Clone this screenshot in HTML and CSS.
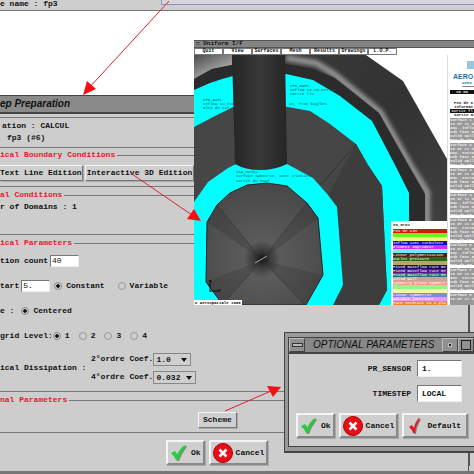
FILE: index.html
```html
<!DOCTYPE html>
<html lang="en">
<head>
<meta charset="utf-8">
<title>Step Preparation</title>
<link rel="stylesheet" href="styles.css">
</head>
<body>
<div class="desktop">
  <header class="strip"><span>e name : fp3</span><span class="strip-box"></span></header>

  <main class="prep">
    <h1 class="titlebar">ep Preparation</h1>
    <form class="form">
      <section class="info">
        <p class="row">ation : CALCUL</p>
        <p class="row file">fp3 (#6)</p>
      </section>
      <section class="boundary">
        <h2>ical Boundary Conditions</h2>
        <div class="tabs">
          <button type="button" class="btn first">Text Line Edition</button>
          <button type="button" class="btn">Interactive 3D Edition</button>
        </div>
      </section>
      <section class="initial">
        <h2>al Conditions</h2>
        <p class="row">r of Domains : 1</p>
      </section>
      <section class="numeric">
        <h2>ical Parameters</h2>
        <div class="rows">
          <div class="row"><label for="count">tion count</label><input class="field" id="count" value="40"></div>
          <div class="row"><label for="start">tart</label><input class="field" id="start" value="5.">
            <label class="opt wide"><input type="radio" name="kind" checked>Constant</label>
            <label class="opt"><input type="radio" name="kind">Variable</label></div>
          <div class="row"><span>e :</span><label class="opt"><input type="radio" name="scheme" checked>Centered</label></div>
          <div class="row levels"><span>grid Level:</span>
            <label class="opt"><input type="radio" name="level" checked>1</label>
            <label class="opt"><input type="radio" name="level">2</label>
            <label class="opt"><input type="radio" name="level">3</label>
            <label class="opt"><input type="radio" name="level">4</label></div>
        </div>
        <div class="dissipation">
          <span class="diss-name">ical Dissipation :</span>
          <div class="coefs">
            <div class="row"><label for="c2">2°ordre Coef.</label><span class="pick"><select id="c2"><option>1.0</option></select></span></div>
            <div class="row"><label for="c4">4°ordre Coef.</label><span class="pick long"><select id="c4"><option>0.032</option></select></span></div>
          </div>
        </div>
      </section>
      <section class="optional">
        <h2>nal Parameters</h2>
        <button type="button" class="btn scheme">Scheme</button>
      </section>
      <section class="actions">
        <button type="button" class="btn big"><svg class="icon" viewBox="0 0 18 18"><path d="M2 10l4-2 2 4Q11 5 16 2l1 1Q12 9 9 17H7Q5 12 2 10z" fill="#888"/><path d="M1 9l4-2 2 4Q10 4 15 1l1 1Q11 8 8 16H6Q4 11 1 9z" fill="#25cf3b"/></svg>Ok</button>
        <button type="button" class="btn big"><svg class="icon round" viewBox="0 0 20 20"><circle cx="10" cy="10" r="9.5" fill="#e90d18" stroke="#a00"/><path d="M6.500 6.500l7 7M13.500 6.500l-7 7" stroke="#fff" stroke-width="2.500"/></svg>Cancel</button>
      </section>
    </form>
  </main>

  <section class="viewer">
    <h2 class="viewer-title">▭ Uniform I/F</h2>
    <nav class="menu"><button>Quit</button><button>View</button><button>Surfaces</button><button>Mesh</button><button>Results</button><button>Drawings</button><button>L.O.P.</button></nav>
    <div class="stage">
      <div class="canvas">
        <svg class="scene" viewBox="194 55 253 250">
          <defs>
            <linearGradient id="body" x1="0" y1="0" x2="1" y2="1"><stop offset="0" stop-color="#3b3b3b"/><stop offset=".5" stop-color="#333"/><stop offset="1" stop-color="#464646"/></linearGradient>
            <linearGradient id="shineL" gradientUnits="userSpaceOnUse" x1="200" y1="50" x2="212" y2="76"><stop offset="0" stop-color="#444"/><stop offset="1" stop-color="#aaa"/></linearGradient>
            <linearGradient id="tube" x1="0" x2="1"><stop offset="0" stop-color="#262626"/><stop offset=".5" stop-color="#383838"/><stop offset="1" stop-color="#262626"/></linearGradient>
            <radialGradient id="hub" gradientUnits="userSpaceOnUse" cx="262" cy="259" r="76"><stop offset="0" stop-color="#111"/><stop offset=".1" stop-color="#383838"/><stop offset=".24" stop-color="#5b5b5b"/><stop offset="1" stop-color="#484848"/></radialGradient>
            <filter id="soft"><feGaussianBlur stdDeviation="2"/></filter>
            <clipPath id="outer"><path d="M194 55H366L403 81 447 159V305H194z"/></clipPath>
          </defs>
          <path fill="#fff" d="M194 55h253v250H194z"/>
          <g clip-path="url(#outer)">
            <path fill="url(#body)" d="M194 55h253v250H194z"/>
            <path fill="url(#shineL)" d="M194 55h38v10l-20 4-18 10z"/>
            <path d="M286 58l30 5 18 11 46 38 30 53 17 27v120" fill="none" stroke="#999" stroke-width="6" filter="url(#soft)"/>
            <path d="M194 79l18-10 20-4 54-1 27 5 22 9 44 35 30 53 16 28v111H194z" fill="#2b2b2b"/>
            <path d="M334 76l46 36 30 53 16 27v113" fill="none" stroke="#858585"/>
            <path fill="#0ff" d="M194 90l16-7 12-4 11-3 53-2 27 6 27 16 32 25 23 44 14 28v112H194z"/>
            <path fill="#464646" d="M194 127l21-11 18-9 55 0 22 4 20 13 26 20 12 21 14 21 5 104-8 15H194z"/>
            <path fill="#3d3d3d" d="M356 144l12 21 14 21 5 104-8 15h-47l11-20-6-78-9-12z"/>
            <path d="M356 144l-35 41" stroke="#333"/>
            <path fill="#0ff" d="M194 202l14-20 20-14 8-4h51l26 14 15 17 9 12 6 78-10 20H194z"/>
            <path fill="url(#hub)" stroke="#222" d="M207 222l10-17 13-12 17-8 20-2 20 3 20 17 11 15 5 57-17 30h-83l-17-23z"/>
            <path fill="#242424" opacity=".2" d="M217 205l45 55-55-38zM307 203l-45 57 56-42zM206 282l56-22-40 45zM305 305l-43-45 61 15z"/>
            <path d="M217 205l45 55 45-57M262 260l-40 45M262 260l43 45" fill="none" stroke="#333" stroke-opacity=".6"/>
            <path d="M255 263l7-4 5-3" stroke="#aaa" fill="none"/>
            <path fill="url(#tube)" d="M232 55h53l2 109q-12 6-27 6-15 0-25-6z"/>
          </g>
          <g class="note">
            <text x="203" y="101">CFD_AXEL</text><text x="203" y="105">Inflow su_ext</text><text x="203" y="109">Bleu de CiP</text>
            <text x="290" y="87">CFD_BAFX</text><text x="290" y="91">Inflow Co.sm-Ext.Bo</text><text x="290" y="95">Sortie flu</text><text x="289" y="105">in, free bag/bec</text>
            <text x="236" y="173">SCA_MOYEU</text><text x="236" y="177">Surface symetrie, avec transition E</text><text x="236" y="182">Sortie du Ouaf</text>
          </g>
          <path d="M210 280v12M210 291h10M209 281h3M218 290h3" stroke="#111" fill="none"/>
          <path fill="#fff" d="M194 300h48v5h-48z"/>
          <text class="credit" x="195" y="304">C Aerospatiale 1998</text>
        </svg>
        <div class="legend">
          <p>IN_Grau</p>
          <ul>
            <li class="c1">Peu de CiM</li><li class="c2"></li><li class="c3"></li><li class="c4">Inflow avec turbulent</li><li class="c5">Element imprimeur</li><li class="c6"></li><li class="c7">Linear polymerisation</li><li class="c8">Outlet pressure</li><li class="c9"></li><li class="c10">Fixed massflow rate me</li><li class="c11">Fixed massflow rate me</li><li class="c12">Fixed massflow rate me</li><li class="c13">Solid wall</li><li class="c14">Symmetry plane symmetr</li><li class="c15"></li><li class="c16"></li><li class="c17">Linear symmetrie</li><li class="c18">Adiabat junctions</li><li class="c20">Face interact to a pla</li>
          </ul>
        </div>
      </div>
      <aside class="side">
        <svg class="mark" viewBox="0 0 8 8"><path d="M1 1h7M1 3h7M1 5h7M1 7h7" stroke="#2a91c4"/></svg>
        <b class="brand">AERO</b>
        <i class="sub">AERO</i>
        <p class="bar">3D EN</p>
        <p class="lines">Peu de C<br>informat</p>
        <p class="bar">Sortie fl</p>
        <p class="lines last">Sortie m</p>
        <div class="cards">
          <p>Surface 1<br>10 07 11 0<br>Dac. inflo<br>Sub face B<br>Solid wall<br>Peu de CF</p>
          <p>Surface 2<br>10 07 11 0<br>Dac. extra<br>Sub face B<br>Solid wall<br>Peu de CF</p>
          <p>Surface 3<br>10 07 11 0<br>Dac. extra<br>Sub face B<br>Solid wall<br>Peu de CF</p>
          <p>Surface 4<br>10 07 11 0<br>Dac. inflo<br>Sub face B<br>Solid wall<br>Peu de CF</p>
          <p>Surface 5<br>10 07 11 0<br>Dac. extra<br>Sub face B<br>Solid wall<br>Peu de CF</p>
          <p>Surface 6<br>10 07 11 0<br>Dac. inflo<br>Sub face B<br>Solid wall<br>Peu de CF</p>
          <p>Surface 7<br>10 07 11 0<br>Dac. extra<br>Sub face B<br>Solid wall<br>Peu de CF</p>
          <p>Surface 8<br>10 07 11 0</p>
        </div>
      </aside>
    </div>
  </section>

  <section class="dialog">
    <div class="dialog-inner">
      <header class="dialog-title">
        <button class="wm" aria-label="Menu"><span class="dash"></span></button>
        <h2>OPTIONAL PARAMETERS</h2>
        <button class="wm" aria-label="Minimize"><span class="dot"></span></button>
        <button class="wm" aria-label="Maximize"><span class="square"></span></button>
      </header>
      <form class="dialog-form">
        <div class="pair"><label for="sensor">PR_SENSOR</label><input id="sensor" value="1."></div>
        <div class="pair"><label for="step">TIMESTEP</label><input id="step" value="LOCAL"></div>
        <div class="dialog-actions">
          <button type="button" class="btn big"><svg class="icon" viewBox="0 0 18 18"><path d="M2 10l4-2 2 4Q11 5 16 2l1 1Q12 9 9 17H7Q5 12 2 10z" fill="#888"/><path d="M1 9l4-2 2 4Q10 4 15 1l1 1Q11 8 8 16H6Q4 11 1 9z" fill="#25cf3b"/></svg>Ok</button>
          <button type="button" class="btn big"><svg class="icon round" viewBox="0 0 20 20"><circle cx="10" cy="10" r="9.5" fill="#e90d18" stroke="#a00"/><path d="M6.500 6.500l7 7M13.500 6.500l-7 7" stroke="#fff" stroke-width="2.500"/></svg>Cancel</button>
          <button type="button" class="btn big default"><svg class="icon" viewBox="0 0 18 18"><path d="M4 11l3-2 2 3Q10 6 14 2l1 1Q11 9 10 17H8Q7 13 4 11z" fill="#888"/><path d="M3 10l3-2 2 3Q9 5 13 1l1 1Q10 8 9 16H7Q6 12 3 10z" fill="#e01c28"/></svg>Default</button>
        </div>
      </form>
    </div>
  </section>

  <svg class="arrows" viewBox="0 0 474 474" width="474" height="474" aria-hidden="true">
    <path d="M169 1L88 89M132 174l60 41M225 411l46-20" stroke="#d8232f" fill="none"/>
    <path d="M83 95l4-14 9 8zM201 221l-14-2 7-10zM281 387l-14-1 6 11z" fill="#fb0d12"/>
  </svg>
</div>
</body>
</html>
```
FILE: styles.css
```css
* { box-sizing: border-box; }
body { margin: 0; background: #fff; color: #111; font: bold 8px/12px "Liberation Mono", monospace; }
h1, h2, p, ul { margin: 0; padding: 0; font-size: inherit; }
button, input, select { font: inherit; color: inherit; margin: 0; border-radius: 0; }
.desktop { position: relative; overflow: hidden; min-height: 100vh; }

.strip { display: flex; height: 11px; line-height: 8px; background: #cfcfcf; border-bottom: 1px solid #777; white-space: pre; }
.strip-box { flex: 1; height: 5px; margin-left: 103px; border: solid #8f8fc0; border-width: 0 0 1px 1px; background: #d6d6da; }

.prep { margin-top: 84px; background: #cdcdcd; border-bottom: 3px solid #777; }
.titlebar { height: 19px; background: #8a8a8a; border-top: 1px solid #444; border-bottom: 2px solid #444; font: italic bold 10px/16px "Liberation Sans", sans-serif; }
.form { margin-right: 5px; padding-top: 3px; border-right: 1px solid #555; box-shadow: 6px 0 0 -5px #555; }
.form section { border-top: 1px solid #777; padding-top: 2px; }
.row { display: flex; align-items: center; height: 12px; }
.form h2 { display: flex; align-items: center; gap: 2px; line-height: 12px; color: #e11a2b; }
.form h2::after { content: ""; flex: 1; border-top: 1px solid #777; }
.info { height: 30px; }
.info .row { padding-left: 2px; }
.info .file { padding-left: 7px; }
.form .boundary { height: 39px; padding-top: 1px; }
.tabs { display: flex; gap: 2px; margin-top: 4px; }
.btn { height: 16px; padding: 0 4px; background: #cfcfcf; border: 1px solid; border-color: #f5f5f5 #777 #777 #f5f5f5; box-shadow: 1px 1px 0 #aaa; line-height: 12px; white-space: nowrap; }
.tabs .btn { padding: 0 1px; }
.tabs .first { padding: 0; border-left: 0; }
.initial { height: 48px; }
.rows { display: flex; flex-direction: column; gap: 13px; margin-top: 6px; }
.field { width: 29px; height: 12px; margin-left: 2px; padding: 0 1px; border: 1px solid; border-color: #777 #eee #eee #777; background: #fff; font-weight: normal; }
.opt { display: flex; align-items: center; gap: 4px; margin-left: 13px; }
.opt.wide { margin-left: 4px; }
.opt input { appearance: none; width: 8px; height: 8px; border: 1px solid #999; border-radius: 50%; }
.opt input:checked { background: radial-gradient(#111 35%, #cdcdcd 50%); border-color: #888; }
.rows .row:nth-child(3) .opt { margin-left: 7px; }
.levels .opt { margin-left: 9px; }
.levels .opt:first-of-type { margin-left: 0; }
.dissipation { display: flex; align-items: center; margin-top: 11px; padding-bottom: 8px; }
.diss-name { width: 91px; white-space: nowrap; }
.coefs { display: flex; flex-direction: column; gap: 6px; }
.pick { position: relative; width: 38px; height: 13px; }
.pick.long { width: 43px; }
.pick select { appearance: none; display: block; width: 100%; height: 100%; padding: 0 2px; border: 1px solid #888; background: #cfcfcf; }
.pick::after { content: ""; position: absolute; right: 4px; top: 5px; border: 3px solid transparent; border-top: 4px solid #111; border-bottom: 0; pointer-events: none; }
.optional { height: 41px; }
.scheme { display: block; margin: 6px 0 0 198px; }
.form .actions { display: flex; gap: 4px; padding: 7px 0 6px 166px; }
.btn.big { display: flex; align-items: center; gap: 3px; height: 25px; padding: 0 2px; border-width: 2px; border-color: #f5f5f5 #888 #888 #f5f5f5; }
.icon { flex: none; width: 18px; height: 18px; }
.icon.round { width: 20px; height: 20px; }

.viewer { position: absolute; left: 194px; right: 0; top: 40px; background: #fff; font-size: 4px; line-height: 4px; }
.viewer-title { height: 8px; padding-left: 2px; background: #848484; border-top: 1px solid #555; border-bottom: 1px solid #555; font: bold 6px/6px "Liberation Mono", monospace; }
.menu { display: grid; grid-template-columns: repeat(7, 29px); height: 7px; }
.menu button { padding: 0; border: 1px solid #777; background: #fff; font-size: 5px; line-height: 5px; }
.stage { display: grid; grid-template-columns: 1fr 27px; }
.canvas { position: relative; }
.scene { display: block; width: 100%; }
.note text { font: normal 4px "Liberation Mono", monospace; fill: #0b5a62; }
.credit { font: bold 4px "Liberation Mono", monospace; }
.legend { position: absolute; right: 0; bottom: 0; width: 56px; padding-left: 2px; background: #fff; }
.legend p { height: 8px; line-height: 8px; color: #333; }
.legend ul { display: grid; grid-auto-rows: 4px; list-style: none; color: #fff; font-weight: normal; }
.legend li { white-space: nowrap; }
.c1 { background: #d3170d; } .c2 { background: #65f51c; } .c3 { background: #f4f97c; } .c4 { background: #1608ce; } .c5 { background: #d02df5; }
.c6 { background: #6bf1f5; } .c7 { background: #4a2313; } .c8 { background: #24681a; } .c9 { background: #b9a565; } .c10 { background: #17145f; }
.c11 { background: #591783; } .c12 { background: #207480; } .c13 { background: #c9a3a0; } .c14 { background: #f29a8c; } .c15 { background: #92f58c; }
.c16 { background: #f7f6a4; } .c17 { background: #8585df; } .c18 { background: #e59bf2; } .c20 { background: #e48b2e; }
.side { height: 0; min-height: 100%; overflow: hidden; padding-left: 2px; white-space: nowrap; border-left: 1px solid #ddd; }
.mark { display: block; width: 8px; height: 8px; margin: 6px 0 4px 16px; }
.brand { display: block; margin-left: 3px; color: #1875a8; font: bold 7px/8px "Liberation Sans", sans-serif; }
.sub { display: block; height: 6px; margin-left: 12px; color: #2588bc; border-bottom: 1px solid #888; line-height: 5px; }
.bar { height: 4px; background: #111; color: #ddd; text-align: center; }
.sub + .bar { margin: 3px 0 7px; }
.lines { padding-left: 4px; }
.lines.last { height: 5px; }
.cards { display: grid; grid-auto-rows: 22px; gap: 3px; }
.cards p { background: #999; color: #eee; }

.dialog { position: absolute; left: 284px; right: 0; top: 332px; padding: 4px 0 4px 3px; background: #999; border: 1px solid #444; border-right: 0; border-bottom-width: 2px; }
.dialog-inner { background: #cdcdcd; border: 1px solid #444; border-right: 0; }
.dialog-title { display: flex; align-items: stretch; height: 16px; background: #888; border-bottom: 2px solid #444; }
.dialog-title h2 { flex: 1; padding-left: 8px; font: italic 10px/14px "Liberation Sans", sans-serif; white-space: nowrap; }
.wm { display: grid; place-items: center; width: 16px; padding: 0; background: #909090; border: 1px solid; border-color: #bbb #444 #444 #bbb; }
.dash { width: 11px; height: 4px; border: 1px solid #333; background: #bbb; }
.dot { width: 4px; height: 4px; background: #222; border: 1px solid #bbb; }
.square { width: 10px; height: 10px; border: 1px solid #222; }
.dialog-form { padding: 6px 6px 8px 7px; }
.pair { display: flex; justify-content: flex-end; align-items: center; gap: 6px; margin: 0 6px 8px 0; }
.pair input { width: 45px; height: 17px; padding: 0 4px; border: 1px solid; border-color: #777 #eee #eee #777; background: #fff; }
.dialog-actions { display: flex; gap: 4px; margin-top: 11px; }
.default { flex: 1; }
.arrows { position: absolute; left: 0; top: 0; pointer-events: none; }
```
